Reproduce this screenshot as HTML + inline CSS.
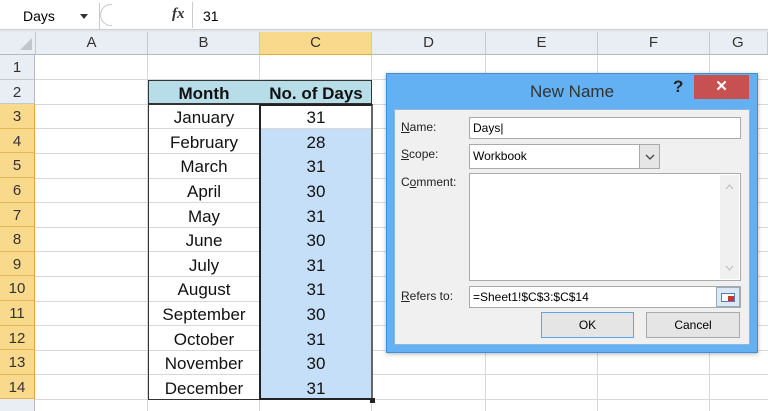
<!DOCTYPE html>
<html><head><meta charset="utf-8"><style>
*{margin:0;padding:0;box-sizing:border-box}
html,body{width:768px;height:411px;overflow:hidden}
body{background:#fff;font-family:"Liberation Sans",sans-serif;position:relative}
.a{position:absolute}
.vl{position:absolute;top:32px;bottom:0;width:1px;background:#d8d8d8}
.hl{position:absolute;left:0;right:0;height:1px;background:#d8d8d8}
.rh{position:absolute;left:0;width:35px;height:24.6px;background:#e9eef5;border-bottom:1px solid #c5c9cf;border-right:1px solid #b5b9bf;color:#333;font-size:15px;text-align:center;line-height:26px}
.rh.s{background:#f9d98b;border-bottom-color:#e2b55a;border-right-color:#e2a838}
.ch{position:absolute;top:32px;height:23px;background:#e9eef5;border-right:1px solid #c5c9cf;border-bottom:1px solid #b5b9bf;color:#333;font-size:15px;text-align:center;line-height:22px}
.cell{position:absolute;height:24.6px;font-size:17px;text-align:center;line-height:27px;color:#111}
.lb{position:absolute;font-size:12px;color:#222}
</style></head><body>
<div class="a" style="left:0;top:0;width:768px;height:30px;background:#fff;border-bottom:1px solid #c9ccd1"></div>
<div class="a" style="left:0;top:3px;width:100px;height:26px;border-right:1px solid #ccc;font-size:14px;line-height:26px;padding-left:23px">Days</div>
<div class="a" style="left:80px;top:14px;width:0;height:0;border-left:4px solid transparent;border-right:4px solid transparent;border-top:5px solid #333"></div>
<div class="a" style="left:100px;top:4px;width:12px;height:22px;border:1px solid #c8c8c8;border-radius:12px 0 0 12px;border-right:none"></div>
<div class="a" style="left:172px;top:6px;font-family:'Liberation Serif',serif;font-style:italic;font-weight:bold;font-size:15px;color:#333">fx</div>
<div class="a" style="left:192px;top:2px;width:1px;height:26px;background:#ccc"></div>
<div class="a" style="left:203px;top:8px;font-size:14px">31</div>
<div class="a" style="left:0;top:30px;width:768px;height:2px;background:#e5e7ea"></div>
<div class="ch" style="left:0;width:36px;background:#e9eef5"></div>
<div class="a" style="left:20px;top:38px;width:0;height:0;border-left:12px solid transparent;border-bottom:12px solid #c2c6cc"></div>
<div class="ch" style="left:36px;width:112px">A</div>
<div class="ch" style="left:148px;width:112px">B</div>
<div class="ch" style="left:260px;width:112px;background:#f9d98b;border-bottom-color:#e2a838">C</div>
<div class="ch" style="left:372px;width:114px">D</div>
<div class="ch" style="left:486px;width:112px">E</div>
<div class="ch" style="left:598px;width:112px">F</div>
<div class="ch" style="left:710px;width:58px;text-align:left;padding-left:22px">G</div>
<div class="vl" style="left:147px;top:55px"></div><div class="vl" style="left:259px;top:55px"></div><div class="vl" style="left:371px;top:55px"></div><div class="vl" style="left:485px;top:55px"></div><div class="vl" style="left:597px;top:55px"></div><div class="vl" style="left:709px;top:55px"></div>
<div class="hl" style="top:79px"></div><div class="hl" style="top:104px"></div><div class="hl" style="top:128px"></div><div class="hl" style="top:153px"></div><div class="hl" style="top:178px"></div><div class="hl" style="top:202px"></div><div class="hl" style="top:227px"></div><div class="hl" style="top:251px"></div><div class="hl" style="top:276px"></div><div class="hl" style="top:301px"></div><div class="hl" style="top:325px"></div><div class="hl" style="top:350px"></div><div class="hl" style="top:374px"></div><div class="hl" style="top:399px"></div>
<div class="rh" style="top:55px">1</div><div class="rh" style="top:79.6px">2</div>
<div class="rh s" style="top:104.2px">3</div><div class="rh s" style="top:128.8px">4</div><div class="rh s" style="top:153.4px">5</div><div class="rh s" style="top:178px">6</div><div class="rh s" style="top:202.6px">7</div><div class="rh s" style="top:227.2px">8</div><div class="rh s" style="top:251.8px">9</div><div class="rh s" style="top:276.4px">10</div><div class="rh s" style="top:301px">11</div><div class="rh s" style="top:325.6px">12</div><div class="rh s" style="top:350.2px">13</div><div class="rh s" style="top:374.8px">14</div><div class="rh" style="top:399.4px"></div>
<div class="a" style="left:260px;top:129px;width:112px;height:271px;background:#c5dff8"></div>
<div class="a" style="left:148px;top:80px;width:224px;height:24px;background:#b7dde8;border:1px solid #333"></div>
<div class="cell" style="left:148px;top:80px;width:112px;font-weight:bold">Month</div>
<div class="cell" style="left:260px;top:80px;width:112px;font-weight:bold">No. of Days</div>
<div class="a" style="left:148px;top:104px;width:113px;height:296px;border:1px solid #333"></div>
<div class="a" style="left:259px;top:104px;width:114px;height:296px;border:2px solid #222;border-right-color:#666"></div>
<div class="cell" style="left:148px;top:104.2px;width:112px">January</div><div class="cell" style="left:260px;top:104.2px;width:112px">31</div>
<div class="cell" style="left:148px;top:128.8px;width:112px">February</div><div class="cell" style="left:260px;top:128.8px;width:112px">28</div>
<div class="cell" style="left:148px;top:153.4px;width:112px">March</div><div class="cell" style="left:260px;top:153.4px;width:112px">31</div>
<div class="cell" style="left:148px;top:178px;width:112px">April</div><div class="cell" style="left:260px;top:178px;width:112px">30</div>
<div class="cell" style="left:148px;top:202.6px;width:112px">May</div><div class="cell" style="left:260px;top:202.6px;width:112px">31</div>
<div class="cell" style="left:148px;top:227.2px;width:112px">June</div><div class="cell" style="left:260px;top:227.2px;width:112px">30</div>
<div class="cell" style="left:148px;top:251.8px;width:112px">July</div><div class="cell" style="left:260px;top:251.8px;width:112px">31</div>
<div class="cell" style="left:148px;top:276.4px;width:112px">August</div><div class="cell" style="left:260px;top:276.4px;width:112px">31</div>
<div class="cell" style="left:148px;top:301px;width:112px">September</div><div class="cell" style="left:260px;top:301px;width:112px">30</div>
<div class="cell" style="left:148px;top:325.6px;width:112px">October</div><div class="cell" style="left:260px;top:325.6px;width:112px">31</div>
<div class="cell" style="left:148px;top:350.2px;width:112px">November</div><div class="cell" style="left:260px;top:350.2px;width:112px">30</div>
<div class="cell" style="left:148px;top:374.8px;width:112px">December</div><div class="cell" style="left:260px;top:374.8px;width:112px">31</div>
<div class="a" style="left:370px;top:398px;width:5px;height:5px;background:#222"></div>
<div class="a" style="left:386px;top:73px;width:372px;height:280px;background:#63b0f3;border:1px solid #3f8fd6;box-shadow:0 1px 4px rgba(0,0,0,.3)"></div>
<div class="a" style="left:386px;top:82px;width:372px;text-align:center;font-size:17px;color:#333">New Name</div>
<div class="a" style="left:673px;top:77px;font-size:17px;font-weight:bold;color:#222">?</div>
<div class="a" style="left:694px;top:75px;width:55px;height:24px;background:#c75050;color:#fff;font-weight:bold;font-size:15px;text-align:center;line-height:24px">✕</div>
<div class="a" style="left:394px;top:109px;width:356px;height:236px;background:#f0f0f0;border:1px solid #8fb8df"></div>
<div class="lb" style="left:401px;top:120px"><u>N</u>ame:</div>
<div class="lb" style="left:401px;top:147px"><u>S</u>cope:</div>
<div class="lb" style="left:401px;top:175px">C<u>o</u>mment:</div>
<div class="lb" style="left:401px;top:289px"><u>R</u>efers to:</div>
<div class="a" style="left:469px;top:117px;width:272px;height:22px;background:#fff;border:1px solid #aaa;font-size:12px;line-height:20px;padding-left:3px">Days|</div>
<div class="a" style="left:469px;top:144px;width:191px;height:25px;background:#fff;border:1px solid #aaa;font-size:12px;line-height:23px;padding-left:3px">Workbook</div>
<div class="a" style="left:639px;top:145px;width:20px;height:23px;background:#e6e6e6;border-left:1px solid #aaa"><svg width="20" height="23"><path d="M6 10 L10 14 L14 10" stroke="#444" stroke-width="1.3" fill="none"/></svg></div>
<div class="a" style="left:469px;top:173px;width:272px;height:108px;background:#fff;border:1px solid #aaa"></div>
<div class="a" style="left:720px;top:175px;width:19px;height:104px;background:#f0f0f0"><svg width="19" height="104"><path d="M6 14 L9.5 10 L13 14 M6 91 L9.5 95 L13 91" stroke="#bbb" stroke-width="1" fill="none"/></svg></div>
<div class="a" style="left:469px;top:286px;width:272px;height:22px;background:#fff;border:1px solid #aaa;font-size:12px;line-height:20px;padding-left:3px">=Sheet1!$C$3:$C$14</div>
<div class="a" style="left:716px;top:287px;width:24px;height:20px;background:#dbe8f5;border:1px solid #9ab"><div class="a" style="left:4px;top:5px;width:14px;height:9px;border:1px solid #5a7ab0;background:#fff"></div><div class="a" style="left:11px;top:8px;width:6px;height:5px;background:#d03030"></div></div>
<div class="a" style="left:541px;top:312px;width:93px;height:26px;background:#e5e5e5;border:1px solid #5ea3e6;font-size:12px;text-align:center;line-height:24px">OK</div>
<div class="a" style="left:646px;top:312px;width:94px;height:26px;background:#e5e5e5;border:1px solid #aaa;font-size:12px;text-align:center;line-height:24px">Cancel</div>
</body></html>
